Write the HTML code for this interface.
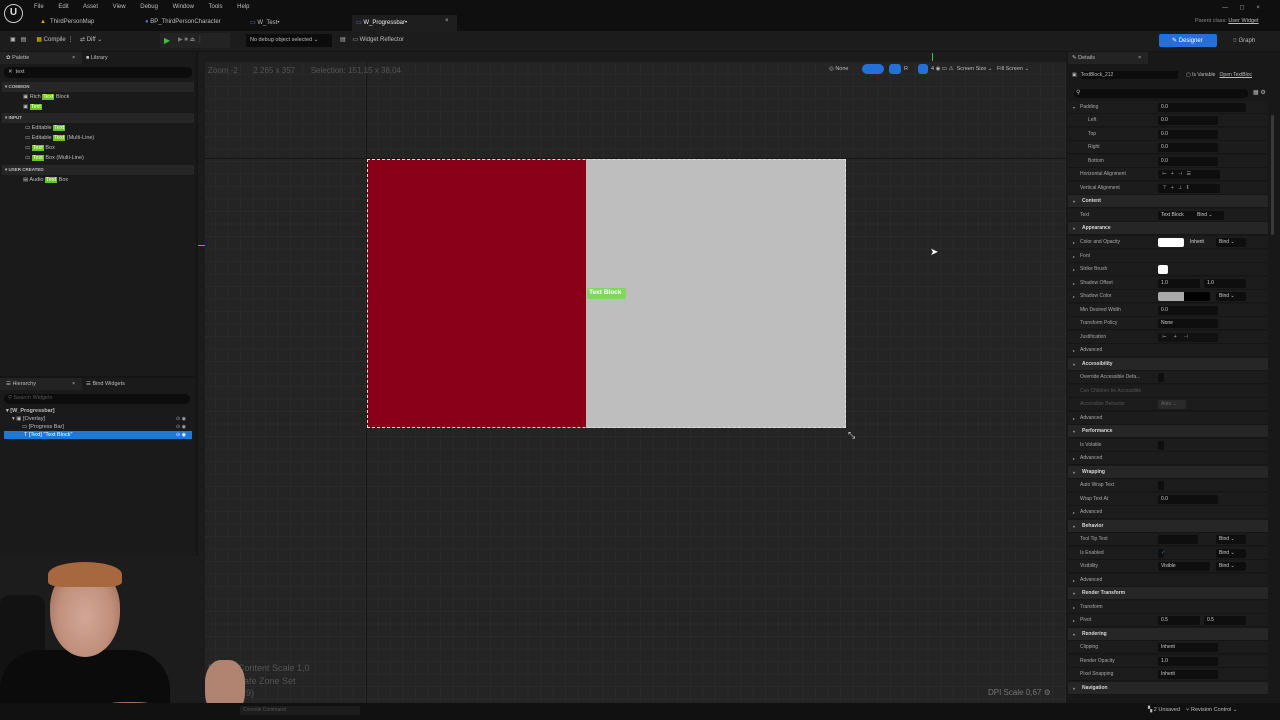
<!DOCTYPE html>
<html><head><meta charset="utf-8"><style>
*{box-sizing:border-box;margin:0;padding:0}
body{width:1280px;height:720px;overflow:hidden;background:#151515;font-family:"Liberation Sans",sans-serif;color:#c8c8c8;position:relative}
.a{position:absolute;white-space:nowrap}
.t{font-size:6px;color:#bdbdbd}
.hl{background:#6fc21c;color:#fff;padding:0 1px}
.r{position:absolute;left:1068px;width:200px;height:13px;font-size:5px;color:#a8a8a8;line-height:13px;border-bottom:1px solid #151515;background:#1c1c1c}
.r.h{background:#262626;color:#d8d8d8;font-weight:bold}
.r span{position:absolute;left:12px}
.r.h span{left:14px}
.r i{position:absolute;left:5px;font-style:normal;font-size:4px;color:#999}
.in{position:absolute;left:90px;top:2px;height:9px;width:60px;background:#0e0e0e;border-radius:2px;font-size:5px;line-height:9px;padding-left:3px;color:#ccc}
</style></head><body>
<div class="a" style="left:0;top:0;width:1280px;height:31px;background:#0f0f0f"></div>
<div class="a" style="left:4px;top:4px;width:19px;height:19px;border-radius:50%;border:1.5px solid #ccc;font-size:10px;color:#ddd;text-align:center;line-height:16px;font-weight:bold">U</div>
<div class="a t" style="left:34px;top:4px;font-size:6px;word-spacing:13px">File Edit Asset View Debug Window Tools Help</div>
<div class="a t" style="left:40px;top:19px;color:#e0a020">▲</div>
<div class="a t" style="left:50px;top:19px">ThirdPersonMap</div>
<div class="a t" style="left:145px;top:19px"><span style="color:#4a78c8">●</span> BP_ThirdPersonCharacter</div>
<div class="a t" style="left:250px;top:19px"><span style="color:#5b8fd6">▭</span> W_Test•</div>
<div class="a" style="left:352px;top:15px;width:105px;height:16px;background:#1e1e1e"></div>
<div class="a t" style="left:356px;top:19px;color:#eee"><span style="color:#5b8fd6">▭</span> W_Progressbar•</div>
<div class="a t" style="left:445px;top:18px">×</div>
<div class="a t" style="left:1195px;top:18px;color:#888;font-size:5.5px">Parent class: <u style="color:#bbb">User Widget</u></div>
<div class="a t" style="left:1222px;top:4px;color:#aaa;word-spacing:10px">— ◻ ×</div>
<div class="a" style="left:0;top:31px;width:1280px;height:20px;background:#1c1c1c"></div>
<div class="a t" style="left:10px;top:36px">▣ &nbsp; ▤ &nbsp;&nbsp;&nbsp;&nbsp; <span style="color:#e8c000">▦</span> Compile ⋮ &nbsp;&nbsp; ⇄ Diff ⌄</div>
<div class="a" style="left:160px;top:33px;width:70px;height:15px;background:#232323"></div>
<div class="a" style="left:164px;top:36px;font-size:8px;color:#3fc03f">▶</div>
<div class="a t" style="left:178px;top:36px;color:#777">▶ ■ ⏏ ⋮</div>
<div class="a" style="left:246px;top:34px;width:86px;height:13px;background:#0c0c0c"></div>
<div class="a t" style="left:250px;top:37px;font-size:5.5px">No debug object selected ⌄</div>
<div class="a t" style="left:340px;top:36px">▤ &nbsp;&nbsp; ▭ Widget Reflector</div>
<div class="a" style="left:1159px;top:34px;width:58px;height:13px;background:#2470d8;border-radius:2px"></div>
<div class="a t" style="left:1172px;top:37px;color:#fff">✎ Designer</div>
<div class="a t" style="left:1233px;top:37px">⁝⁝ Graph</div>
<div class="a" style="left:0;top:52px;width:196px;height:324px;background:#1a1a1a"></div>
<div class="a" style="left:0;top:52px;width:82px;height:12px;background:#232323"></div>
<div class="a t" style="left:6px;top:55px;font-size:5.5px">✿ Palette</div>
<div class="a t" style="left:72px;top:55px;font-size:5.5px">×</div>
<div class="a t" style="left:86px;top:55px;font-size:5.5px">■ Library</div>
<div class="a" style="left:4px;top:67px;width:188px;height:11px;background:#0c0c0c;border-radius:5px"></div>
<div class="a t" style="left:8px;top:69px;font-size:5.5px">✕ &nbsp;text</div>
<div class="a" style="left:2px;top:82px;width:192px;height:10px;background:#262626"></div>
<div class="a t" style="left:5px;top:84px;font-size:4.5px;font-weight:bold">▾ COMMON</div>
<div class="a t" style="left:23px;top:94px;font-size:5.5px">▣ Rich <span class="hl">Text</span> Block</div>
<div class="a t" style="left:23px;top:104px;font-size:5.5px">▣ <span class="hl">Text</span></div>
<div class="a" style="left:2px;top:113px;width:192px;height:10px;background:#262626"></div>
<div class="a t" style="left:5px;top:115px;font-size:4.5px;font-weight:bold">▾ INPUT</div>
<div class="a t" style="left:25px;top:125px;font-size:5.5px">▭ Editable <span class="hl">Text</span></div>
<div class="a t" style="left:25px;top:135px;font-size:5.5px">▭ Editable <span class="hl">Text</span> (Multi-Line)</div>
<div class="a t" style="left:25px;top:145px;font-size:5.5px">▭ <span class="hl">Text</span> Box</div>
<div class="a t" style="left:25px;top:155px;font-size:5.5px">▭ <span class="hl">Text</span> Box (Multi-Line)</div>
<div class="a" style="left:2px;top:165px;width:192px;height:10px;background:#262626"></div>
<div class="a t" style="left:5px;top:167px;font-size:4.5px;font-weight:bold">▾ USER CREATED</div>
<div class="a t" style="left:23px;top:177px;font-size:5.5px">▤ Audio <span class="hl">Text</span> Box</div>
<div class="a" style="left:0;top:378px;width:196px;height:325px;background:#1a1a1a"></div>
<div class="a" style="left:0;top:378px;width:82px;height:12px;background:#232323"></div>
<div class="a t" style="left:6px;top:381px;font-size:5.5px">☰ Hierarchy</div>
<div class="a t" style="left:72px;top:381px;font-size:5.5px">×</div>
<div class="a t" style="left:86px;top:381px;font-size:5.5px">☰ Bind Widgets</div>
<div class="a" style="left:4px;top:394px;width:186px;height:10px;background:#0c0c0c;border-radius:5px"></div>
<div class="a t" style="left:8px;top:395px;font-size:5.5px;color:#555">⚲ Search Widgets</div>
<div class="a t" style="left:6px;top:408px;font-size:5.5px;font-weight:bold">▾ [W_Progressbar]</div>
<div class="a t" style="left:12px;top:416px;font-size:5.5px">▾ ▣ [Overlay]</div>
<div class="a t" style="left:22px;top:424px;font-size:5.5px">▭ [Progress Bar]</div>
<div class="a" style="left:4px;top:431px;width:188px;height:8px;background:#1b7ad8"></div>
<div class="a t" style="left:24px;top:432px;font-size:5.5px;color:#fff">T [Text] "Text Block"</div>
<div class="a t" style="left:176px;top:416px;font-size:5px;color:#aaa">⊙ ◉</div>
<div class="a t" style="left:176px;top:424px;font-size:5px;color:#aaa">⊙ ◉</div>
<div class="a t" style="left:176px;top:432px;font-size:5px;color:#fff">⊙ ◉</div>
<div class="a" style="left:198px;top:52px;width:868px;height:651px;background-color:#242424;background-image:linear-gradient(#2a2a2a 1px,transparent 1px),linear-gradient(90deg,#2a2a2a 1px,transparent 1px);background-size:12.5px 12.5px;background-position:367px 159px"></div>
<div class="a" style="left:198px;top:52px;width:868px;height:10px;background:#1c1c1c"></div>
<div class="a" style="left:198px;top:52px;width:7px;height:651px;background:#1c1c1c"></div>
<div class="a" style="left:366px;top:62px;width:1px;height:641px;background:#161616"></div>
<div class="a" style="left:205px;top:158px;width:861px;height:1px;background:#161616"></div>
<div class="a" style="left:932px;top:53px;width:1px;height:8px;background:#3fc03f"></div>
<div class="a" style="left:198px;top:245px;width:7px;height:1px;background:#3fc03f"></div>
<div class="a t" style="left:208px;top:66px;font-size:8px;color:#555">Zoom -2 &nbsp;&nbsp;&nbsp;&nbsp;&nbsp; 2.265 x 357 &nbsp;&nbsp;&nbsp;&nbsp;&nbsp; Selection: 151,15 x 38,04</div>
<div class="a t" style="left:829px;top:66px;font-size:5.5px">◎ None</div>
<div class="a" style="left:862px;top:64px;width:22px;height:10px;background:#2470d8;border-radius:5px"></div>
<div class="a" style="left:889px;top:64px;width:12px;height:10px;background:#2470d8;border-radius:3px"></div>
<div class="a t" style="left:904px;top:66px;font-size:5.5px">R</div>
<div class="a" style="left:918px;top:64px;width:10px;height:10px;background:#2470d8;border-radius:3px"></div>
<div class="a t" style="left:931px;top:66px;font-size:5.5px">4 ◉ ▭ ⚠ &nbsp;Screen Size ⌄ &nbsp; Fill Screen ⌄</div>
<div class="a" style="left:367px;top:159px;width:219px;height:269px;background:#8a0018"></div>
<div class="a" style="left:586px;top:159px;width:260px;height:269px;background:#bebebe"></div>
<div class="a" style="left:367px;top:159px;width:479px;height:269px;border:1px dashed #ddd"></div>
<div class="a" style="left:587px;top:288px;width:39px;height:11px;background:#7ed85e;border-radius:2px"></div>
<div class="a" style="left:589px;top:289px;font-size:6.5px;color:#fff;font-weight:bold">Text Block</div>
<div class="a" style="left:848px;top:430px;font-size:9px;color:#ddd">⤡</div>
<div class="a" style="left:930px;top:247px;font-size:10px;color:#fff">➤</div>
<div class="a" style="left:208px;top:662px;font-size:9px;color:#555;line-height:12.5px">Device Content Scale 1,0<br>Device Safe Zone Set<br>1920 (16:9)</div>
<div class="a" style="left:988px;top:688px;font-size:8px;color:#777">DPI Scale 0,67 ⚙</div>
<div class="a" style="left:0;top:556px;width:198px;height:164px;background:#1c1c1c"></div>
<div class="a" style="left:0;top:595px;width:45px;height:125px;background:#121212;border-radius:10px 10px 0 0"></div>
<div class="a" style="left:0;top:650px;width:170px;height:70px;background:#0b0b0b;border-radius:40px 40px 0 0"></div>
<div class="a" style="left:50px;top:567px;width:70px;height:90px;background:radial-gradient(ellipse at 50% 55%,#d3a696 0%,#c0907c 55%,#8e5e48 100%);border-radius:45% 45% 50% 50%"></div>
<div class="a" style="left:48px;top:562px;width:74px;height:25px;background:#a8683f;border-radius:50% 50% 20% 20%"></div>
<div class="a" style="left:205px;top:660px;width:40px;height:55px;background:#b08470;border-radius:40%"></div>
<div class="a" style="left:100px;top:702px;width:60px;height:18px;background:#9c745f;border-radius:40%"></div>
<div class="a" style="left:1066px;top:52px;width:214px;height:651px;background:#181818"></div>
<div class="a" style="left:1068px;top:52px;width:80px;height:12px;background:#232323"></div>
<div class="a t" style="left:1072px;top:55px;font-size:5.5px">✎ Details</div>
<div class="a t" style="left:1138px;top:55px;font-size:5.5px">×</div>
<div class="a" style="left:1082px;top:71px;width:96px;height:8px;background:#0c0c0c"></div>
<div class="a t" style="left:1072px;top:72px;font-size:5px">▣ &nbsp; TextBlock_212</div>
<div class="a t" style="left:1186px;top:72px;font-size:5px">▢ Is Variable &nbsp;&nbsp;<u>Open TextBloc</u></div>
<div class="a" style="left:1074px;top:89px;width:174px;height:9px;background:#0c0c0c;border-radius:4px"></div>
<div class="a t" style="left:1076px;top:89px;font-size:6px">⚲</div>
<div class="a t" style="left:1253px;top:89px;font-size:6px">▦ ⚙</div>
<div class="a" style="left:1271px;top:115px;width:3px;height:120px;background:#3a3a3a;border-radius:2px"></div>

<div class="r" style="top:101px"><i>▾</i><span>Padding</span><div class="in" style="width:88px">0.0</div></div>
<div class="r" style="top:114px"><span style="left:20px">Left</span><div class="in">0.0</div></div>
<div class="r" style="top:128px"><span style="left:20px">Top</span><div class="in">0.0</div></div>
<div class="r" style="top:141px"><span style="left:20px">Right</span><div class="in">0.0</div></div>
<div class="r" style="top:155px"><span style="left:20px">Bottom</span><div class="in">0.0</div></div>
<div class="r" style="top:168px"><span>Horizontal Alignment</span><div class="in" style="width:62px;color:#aaa">&nbsp;⊢ &nbsp;&nbsp;+ &nbsp;&nbsp;⊣ &nbsp;&nbsp;☰</div></div>
<div class="r" style="top:182px"><span>Vertical Alignment</span><div class="in" style="width:62px;color:#aaa">&nbsp;⊤ &nbsp;&nbsp;+ &nbsp;&nbsp;⊥ &nbsp;&nbsp;‖</div></div>
<div class="r h" style="top:195px"><i>▾</i><span>Content</span></div>
<div class="r" style="top:209px"><span>Text</span><div class="in" style="width:40px">Text Block</div><div class="in" style="left:126px;width:30px">Bind ⌄</div></div>
<div class="r h" style="top:222px"><i>▾</i><span>Appearance</span></div>
<div class="r" style="top:236px"><i>▸</i><span>Color and Opacity</span><div class="in" style="width:26px;background:#fff"></div><div class="a" style="left:122px;top:0;font-size:5px;color:#ddd">Inherit</div><div class="in" style="left:148px;width:30px">Bind ⌄</div></div>
<div class="r" style="top:250px"><i>▸</i><span>Font</span></div>
<div class="r" style="top:263px"><i>▸</i><span>Strike Brush</span><div class="in" style="width:10px;background:#fff"></div></div>
<div class="r" style="top:277px"><i>▸</i><span>Shadow Offset</span><div class="in" style="width:42px">1.0</div><div class="in" style="left:136px;width:42px">1.0</div></div>
<div class="r" style="top:290px"><i>▸</i><span>Shadow Color</span><div class="in" style="width:52px;background:linear-gradient(90deg,#aaa 50%,#000 50%)"></div><div class="in" style="left:148px;width:30px">Bind ⌄</div></div>
<div class="r" style="top:304px"><span>Min Desired Width</span><div class="in">0.0</div></div>
<div class="r" style="top:317px"><span>Transform Policy</span><div class="in">None</div></div>
<div class="r" style="top:331px"><span>Justification</span><div class="in" style="background:#111;color:#aaa">&nbsp;⊢ &nbsp;&nbsp;&nbsp;&nbsp;+ &nbsp;&nbsp;&nbsp;&nbsp;⊣</div></div>
<div class="r" style="top:344px"><i>▸</i><span>Advanced</span></div>
<div class="r h" style="top:358px"><i>▾</i><span>Accessibility</span></div>
<div class="r" style="top:371px"><span>Override Accessible Defa...</span><div class="in" style="width:6px"></div></div>
<div class="r" style="top:385px;color:#555"><span>Can Children be Accessible</span></div>
<div class="r" style="top:398px;color:#555"><span>Accessible Behavior</span><div class="in" style="width:28px;background:#2a2a2a;color:#666">Auto ⌄</div></div>
<div class="r" style="top:412px"><i>▸</i><span>Advanced</span></div>
<div class="r h" style="top:425px"><i>▾</i><span>Performance</span></div>
<div class="r" style="top:439px"><span>Is Volatile</span><div class="in" style="width:6px"></div></div>
<div class="r" style="top:452px"><i>▸</i><span>Advanced</span></div>
<div class="r h" style="top:466px"><i>▾</i><span>Wrapping</span></div>
<div class="r" style="top:479px"><span>Auto Wrap Text</span><div class="in" style="width:6px"></div></div>
<div class="r" style="top:493px"><span>Wrap Text At</span><div class="in">0.0</div></div>
<div class="r" style="top:506px"><i>▸</i><span>Advanced</span></div>
<div class="r h" style="top:520px"><i>▾</i><span>Behavior</span></div>
<div class="r" style="top:533px"><span>Tool Tip Text</span><div class="in" style="width:40px"></div><div class="in" style="left:148px;width:30px">Bind ⌄</div></div>
<div class="r" style="top:547px"><span>Is Enabled</span><div class="in" style="width:6px;color:#4a90e0">✓</div><div class="in" style="left:148px;width:30px">Bind ⌄</div></div>
<div class="r" style="top:560px"><span>Visibility</span><div class="in" style="width:52px">Visible</div><div class="in" style="left:148px;width:30px">Bind ⌄</div></div>
<div class="r" style="top:574px"><i>▸</i><span>Advanced</span></div>
<div class="r h" style="top:587px"><i>▾</i><span>Render Transform</span></div>
<div class="r" style="top:601px"><i>▸</i><span>Transform</span></div>
<div class="r" style="top:614px"><i>▸</i><span>Pivot</span><div class="in" style="width:42px">0.5</div><div class="in" style="left:136px;width:42px">0.5</div></div>
<div class="r h" style="top:628px"><i>▾</i><span>Rendering</span></div>
<div class="r" style="top:641px"><span>Clipping</span><div class="in">Inherit</div></div>
<div class="r" style="top:655px"><span>Render Opacity</span><div class="in">1.0</div></div>
<div class="r" style="top:668px"><span>Pixel Snapping</span><div class="in">Inherit</div></div>
<div class="r h" style="top:682px"><i>▾</i><span>Navigation</span></div>
<div class="a" style="left:0;top:703px;width:1280px;height:17px;background:#111"></div>
<div class="a" style="left:240px;top:706px;width:120px;height:9px;background:#1c1c1c"></div>
<div class="a t" style="left:243px;top:707px;font-size:5px;color:#555">Console Command</div>
<div class="a t" style="left:1148px;top:707px;font-size:5.5px">▚ 2 Unsaved &nbsp;&nbsp; ⑂ Revision Control ⌄</div>
</body></html>
